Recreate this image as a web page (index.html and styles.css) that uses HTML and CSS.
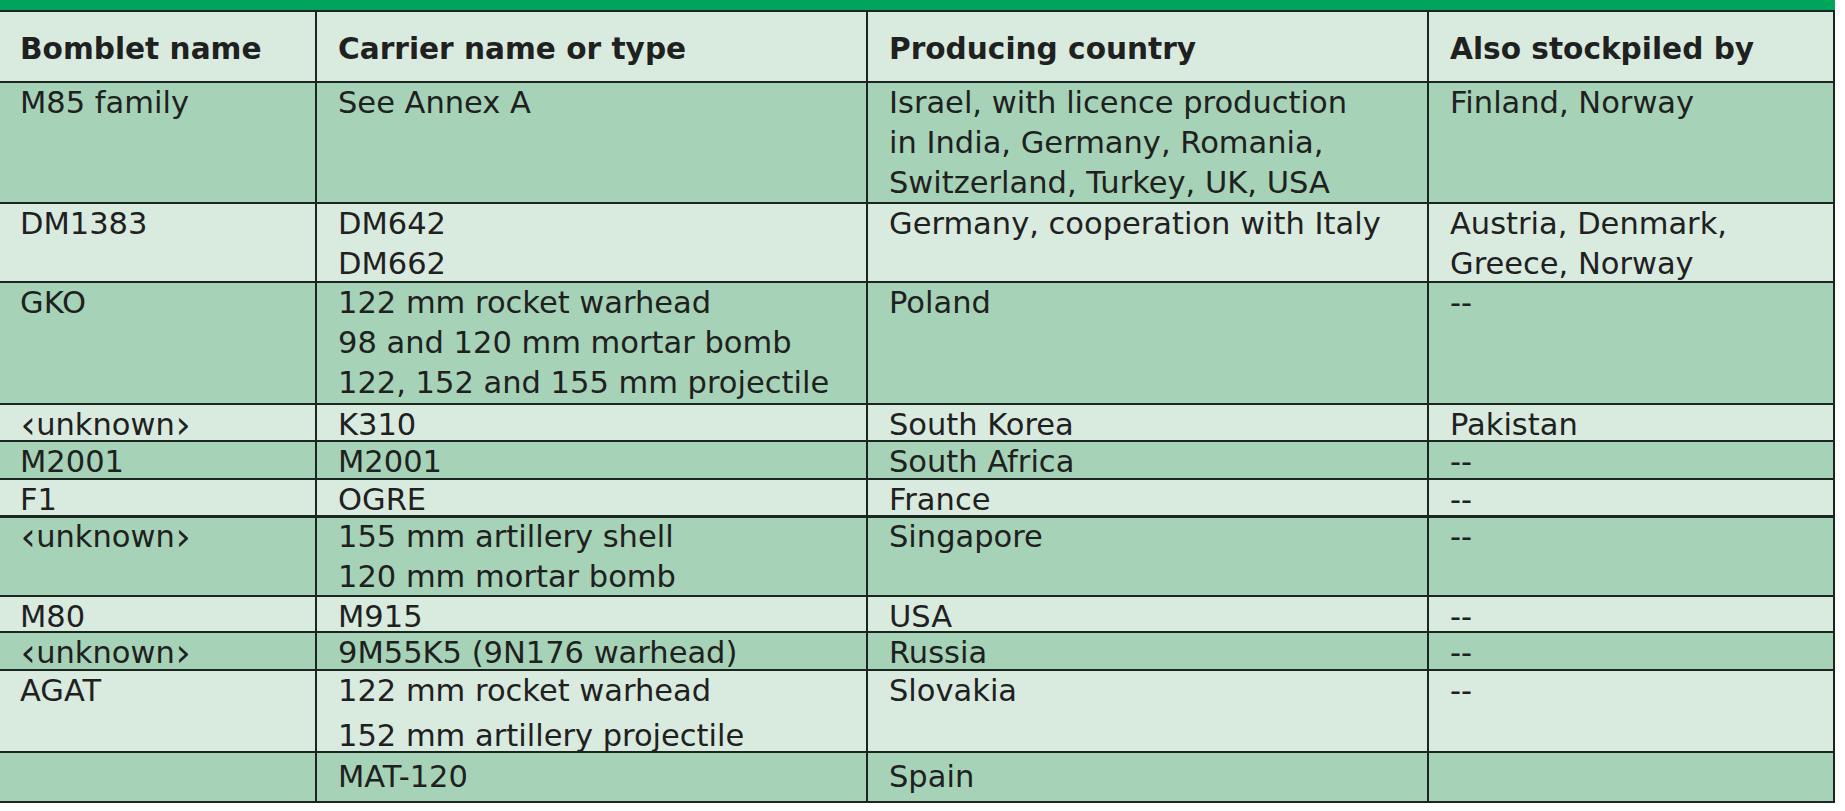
FILE: index.html
```html
<!DOCTYPE html>
<html lang="en">
<head>
<meta charset="utf-8">
<title>Bomblets</title>
<link rel="stylesheet" href="styles.css">
</head>
<body>
<div class="sheet">
  <div class="topbar"></div>
  <div class="grid">
    <div class="row head">
      <div class="cell">Bomblet name</div>
      <div class="cell">Carrier name or type</div>
      <div class="cell">Producing country</div>
      <div class="cell">Also stockpiled by</div>
    </div>
    <div class="row dark">
      <div class="cell">M85 family</div>
      <div class="cell">See Annex A</div>
      <div class="cell">Israel, with licence production<br>in India, Germany, Romania,<br>Switzerland, Turkey, UK, USA</div>
      <div class="cell">Finland, Norway</div>
    </div>
    <div class="row light">
      <div class="cell">DM1383</div>
      <div class="cell">DM642<br>DM662</div>
      <div class="cell">Germany, cooperation with Italy</div>
      <div class="cell">Austria, Denmark,<br>Greece, Norway</div>
    </div>
    <div class="row dark">
      <div class="cell">GKO</div>
      <div class="cell">122 mm rocket warhead<br>98 and 120 mm mortar bomb<br>122, 152 and 155 mm projectile</div>
      <div class="cell">Poland</div>
      <div class="cell">--</div>
    </div>
    <div class="row light">
      <div class="cell"><span class="br">&#x2039;</span>unknown<span class="br">&#x203A;</span></div>
      <div class="cell">K310</div>
      <div class="cell">South Korea</div>
      <div class="cell">Pakistan</div>
    </div>
    <div class="row dark">
      <div class="cell">M2001</div>
      <div class="cell">M2001</div>
      <div class="cell">South Africa</div>
      <div class="cell">--</div>
    </div>
    <div class="row light">
      <div class="cell">F1</div>
      <div class="cell">OGRE</div>
      <div class="cell">France</div>
      <div class="cell">--</div>
    </div>
    <div class="row dark thick">
      <div class="cell"><span class="br">&#x2039;</span>unknown<span class="br">&#x203A;</span></div>
      <div class="cell">155 mm artillery shell<br>120 mm mortar bomb</div>
      <div class="cell">Singapore</div>
      <div class="cell">--</div>
    </div>
    <div class="row light">
      <div class="cell">M80</div>
      <div class="cell">M915</div>
      <div class="cell">USA</div>
      <div class="cell">--</div>
    </div>
    <div class="row dark">
      <div class="cell"><span class="br">&#x2039;</span>unknown<span class="br">&#x203A;</span></div>
      <div class="cell">9M55K5 (9N176 warhead)</div>
      <div class="cell">Russia</div>
      <div class="cell">--</div>
    </div>
    <div class="row light">
      <div class="cell">AGAT</div>
      <div class="cell"><div>122 mm rocket warhead</div><div class="gapline">152 mm artillery projectile</div></div>
      <div class="cell">Slovakia</div>
      <div class="cell">--</div>
    </div>
    <div class="row dark last">
      <div class="cell"></div>
      <div class="cell">MAT-120</div>
      <div class="cell">Spain</div>
      <div class="cell"></div>
    </div>
  </div>
</div>
</body>
</html>
```

FILE: styles.css
```css
html, body {
  margin: 0;
  padding: 0;
  background: #ffffff;
}

.sheet {
  width: 1835px;
}

.topbar {
  height: 10px;
  background: #00a45c;
}

.grid {
  display: grid;
  grid-template-columns: 315px 549px 559px 404px;
  grid-template-rows: 69px 119px 77px 120px 35px 36px 35px 78px 34px 36px 80px 48px;
  column-gap: 2px;
  row-gap: 2px;
  padding: 2px 2px 2px 0;
  background: #1c2620;
  font-family: "DejaVu Sans", "Liberation Sans", sans-serif;
  color: #1f211f;
}

.row {
  display: contents;
}

.cell {
  padding: 0 0 0 21px;
  font-size: 30.5px;
  line-height: 40px;
  white-space: nowrap;
  overflow: visible;
}

.row .cell:first-child {
  padding-left: 20px;
}

.row.head .cell {
  background: #d9eadf;
  font-weight: bold;
  font-size: 29.6px;
  padding-top: 17px;
}

.row.light .cell {
  background: #d9eadf;
}

.row.dark .cell {
  background: #a6d2b7;
}

.row.thick .cell {
  box-shadow: inset 0 1px 0 #1c2620;
}

.row.last .cell {
  padding-top: 4px;
}

.br {
  display: inline-block;
  transform: scale(1.25, 1.3);
  margin: 0 2px;
}

.gapline {
  margin-top: 5px;
}
```
